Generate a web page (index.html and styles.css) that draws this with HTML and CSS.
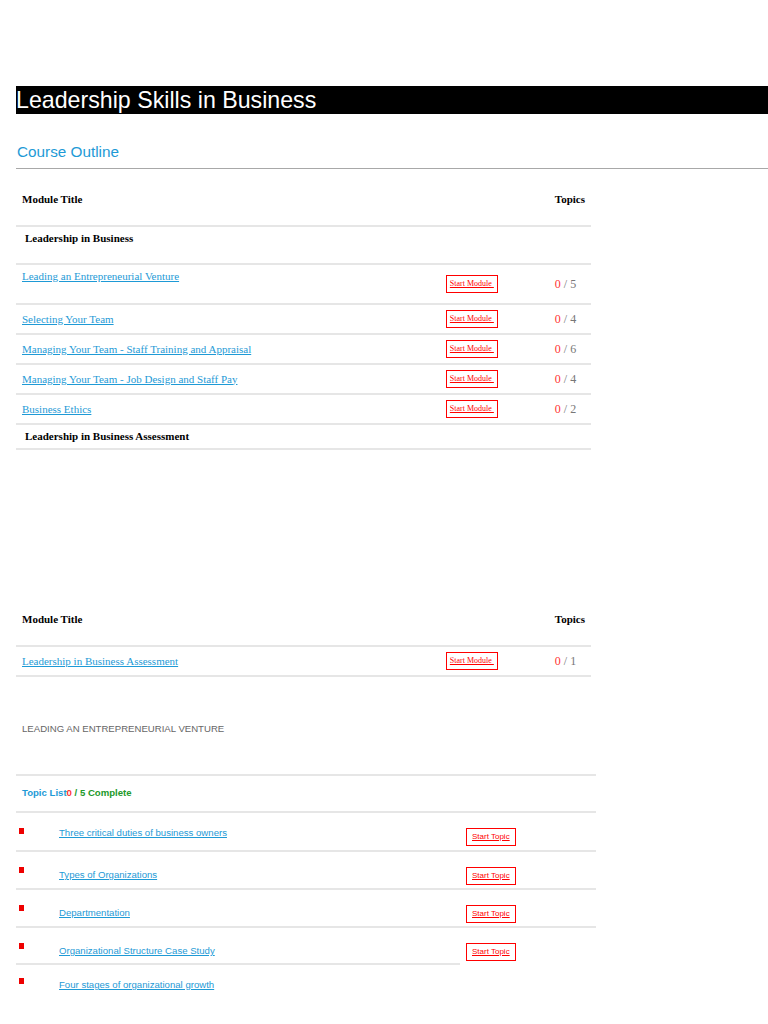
FILE: index.html
```html
<!DOCTYPE html>
<html lang="en">
<head>
    <meta charset="UTF-8">
    <meta name="viewport" content="width=device-width, initial-scale=1.0">
    <title>Leadership Skills in Business</title>
    <link rel="stylesheet" href="styles.css">
</head>
<body>

    <div class="page">
        <h1 class="course-title">Leadership Skills in Business</h1>
        <h2 class="outline-heading">Course Outline</h2>

        <table class="modules">
            <thead>
                <tr>
                    <th class="col-title">Module Title</th>
                    <th class="col-action"></th>
                    <th class="col-count">Topics</th>
                </tr>
            </thead>
            <tbody>
                <tr class="group">
                    <td colspan="3">Leadership in Business</td>
                </tr>
                <tr class="first">
                    <td class="title-cell"><a href="#">Leading an Entrepreneurial Venture</a></td>
                    <td><a href="#" class="start-btn">Start Module </a></td>
                    <td class="count"><span class="done">0</span> / 5</td>
                </tr>
                <tr>
                    <td><a href="#">Selecting Your Team</a></td>
                    <td><a href="#" class="start-btn">Start Module </a></td>
                    <td class="count"><span class="done">0</span> / 4</td>
                </tr>
                <tr>
                    <td><a href="#">Managing Your Team - Staff Training and Appraisal</a></td>
                    <td><a href="#" class="start-btn">Start Module </a></td>
                    <td class="count"><span class="done">0</span> / 6</td>
                </tr>
                <tr>
                    <td><a href="#">Managing Your Team - Job Design and Staff Pay</a></td>
                    <td><a href="#" class="start-btn">Start Module </a></td>
                    <td class="count"><span class="done">0</span> / 4</td>
                </tr>
                <tr>
                    <td><a href="#">Business Ethics</a></td>
                    <td><a href="#" class="start-btn">Start Module </a></td>
                    <td class="count"><span class="done">0</span> / 2</td>
                </tr>
                <tr class="group small">
                    <td colspan="3">Leadership in Business Assessment</td>
                </tr>
            </tbody>
        </table>

        <table class="modules assessment">
            <thead>
                <tr>
                    <th class="col-title">Module Title</th>
                    <th class="col-action"></th>
                    <th class="col-count">Topics</th>
                </tr>
            </thead>
            <tbody>
                <tr>
                    <td><a href="#">Leadership in Business Assessment</a></td>
                    <td><a href="#" class="start-btn">Start Module </a></td>
                    <td class="count"><span class="done">0</span> / 1</td>
                </tr>
            </tbody>
        </table>

        <h3 class="module-name">LEADING AN ENTREPRENEURIAL VENTURE</h3>

        <table class="topics">
            <thead>
                <tr>
                    <th colspan="3"><span class="label">Topic List</span><span class="done">0</span><span class="complete"> / 5 Complete</span></th>
                </tr>
            </thead>
            <tbody>
                <tr class="first">
                    <td class="bullet-cell"><span class="bullet"></span></td>
                    <td class="topic-cell"><a href="#">Three critical duties of business owners</a></td>
                    <td class="btn-cell"><a href="#" class="start-btn">Start Topic</a></td>
                </tr>
                <tr>
                    <td class="bullet-cell"><span class="bullet"></span></td>
                    <td class="topic-cell"><a href="#">Types of Organizations</a></td>
                    <td class="btn-cell"><a href="#" class="start-btn">Start Topic</a></td>
                </tr>
                <tr>
                    <td class="bullet-cell"><span class="bullet"></span></td>
                    <td class="topic-cell"><a href="#">Departmentation</a></td>
                    <td class="btn-cell"><a href="#" class="start-btn">Start Topic</a></td>
                </tr>
                <tr>
                    <td class="bullet-cell"><span class="bullet"></span></td>
                    <td class="topic-cell"><a href="#">Organizational Structure Case Study</a></td>
                    <td class="btn-cell"><a href="#" class="start-btn">Start Topic</a></td>
                </tr>
                <tr class="last">
                    <td class="bullet-cell"><span class="bullet"></span></td>
                    <td class="topic-cell"><a href="#">Four stages of organizational growth</a></td>
                </tr>
            </tbody>
        </table>
    </div>

</body>
</html>
```

FILE: styles.css
```css
body {
    margin: 0;
    font-family: 'Liberation Serif', 'Times New Roman', serif;
    background-color: #fff;
    color: #000;
}

a {
    color: #1e9ad6;
}

.page {
    padding: 86px 0 60px 16px;
}

.course-title {
    margin: 0;
    background-color: #000;
    color: #fff;
    font: 400 23.2px/28px 'Liberation Sans', Arial, sans-serif;
}

.outline-heading {
    margin: 29px 0 0;
    padding: 0 0 8px 1px;
    border-bottom: 1px solid #a8a8a8;
    color: #1e9ad6;
    font: 400 15.3px/17px 'Liberation Sans', Arial, sans-serif;
}

/* module tables */

.modules {
    width: 575px;
    margin-top: 4px;
    border-collapse: collapse;
    font-size: 11px;
    line-height: 13px;
}

.modules th {
    padding: 20px 6px 19px;
    text-align: left;
    font-weight: bold;
    border-bottom: 2px solid #e6e6e6;
}

.modules td {
    padding: 5px 6px;
    vertical-align: middle;
    border-bottom: 2px solid #e6e6e6;
}

.modules .col-title {
    width: 412px;
}

.modules .col-action {
    width: 97px;
}

.modules .group td {
    padding: 5px 9px 18px;
    font-weight: bold;
}

.modules .group.small td {
    padding: 5px 9px 5px;
}

.modules .first td {
    padding: 10px 6px;
}

.modules .first .title-cell {
    padding: 5px 6px 20px;
}

.count {
    color: #777;
    font-size: 12px;
}

.done {
    color: #f33;
}

.start-btn {
    display: inline-block;
    border: 1px solid #f00;
    padding: 3px 3px;
    color: #f00;
    font-size: 8px;
    line-height: 10px;
    white-space: pre;
}

.assessment {
    margin-top: 143px;
}

.module-name {
    margin: 45px 0 0;
    padding-left: 6px;
    color: #666;
    font: 400 9.6px/13px 'Liberation Sans', Arial, sans-serif;
}

/* topic list */

.topics {
    width: 580px;
    margin-top: 39px;
    border-collapse: collapse;
    font-family: 'Liberation Sans', Arial, sans-serif;
    font-size: 9.6px;
    line-height: 12px;
}

.topics th {
    padding: 11px 6px 12px;
    text-align: left;
    font-weight: bold;
    border-top: 2px solid #e6e6e6;
}

.topics .label {
    color: #1e9ad6;
}

.topics .complete {
    color: #22992a;
}

.topics td {
    padding: 15px 6px 3px;
    vertical-align: top;
    border-top: 2px solid #e6e6e6;
}

.topics .bullet-cell {
    width: 31px;
    padding-left: 3px;
    padding-right: 3px;
}

.topics .topic-cell {
    width: 395px;
    padding-top: 17px;
}

.topics .first td {
    padding-bottom: 4px;
}

.topics .first .topic-cell {
    padding-top: 14px;
}

.topics .last td {
    padding-top: 13px;
}

.topics .last .topic-cell {
    padding-top: 14px;
}

.bullet {
    display: block;
    width: 5px;
    height: 6px;
    background-color: #e00;
}

.topics .start-btn {
    padding: 3px 5px;
    font-family: 'Liberation Sans', Arial, sans-serif;
}
```
